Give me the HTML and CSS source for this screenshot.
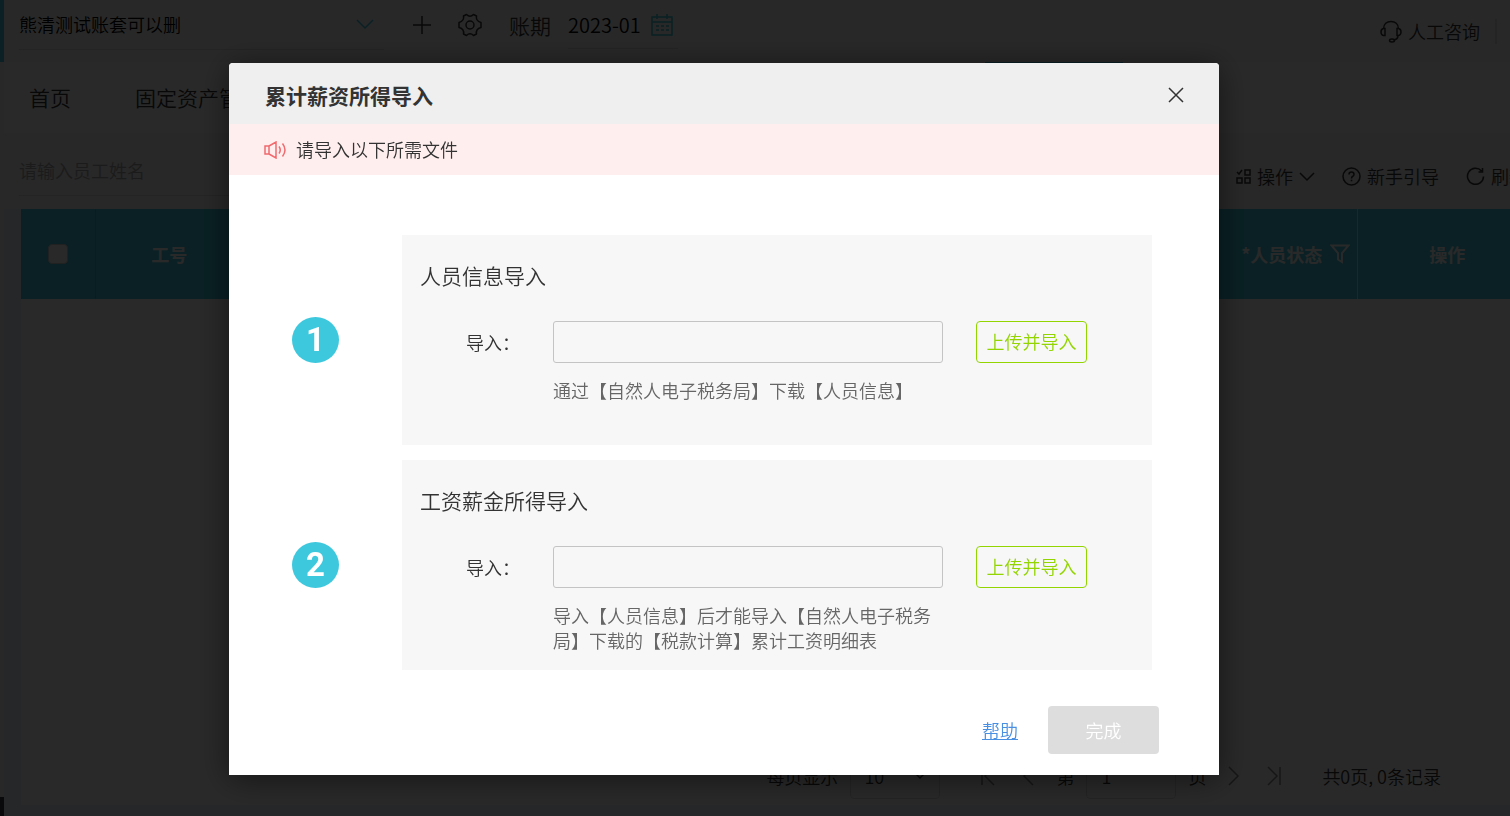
FILE: index.html
```
<!DOCTYPE html>
<html lang="zh-CN">
<head>
    <meta charset="UTF-8">
    <meta name="viewport" content="width=device-width, initial-scale=1.0">
    <title>累计薪资所得导入</title>
    <link rel="stylesheet" href="styles.css">
</head>
<body>

    <div class="app">
        <div class="rail">
            <div class="rail-top"></div>
            <div class="rail-bottom"></div>
        </div>

        <div class="main">
            <header class="topbar">
                <div class="topbar-left">
                    <div class="account">
                        <select aria-label="账套">
                            <option>熊清测试账套可以删</option>
                        </select>
                        <svg class="teal" width="18" height="11" viewBox="0 0 18 11"><path d="M1 1l8 8 8-8"/></svg>
                    </div>
                    <button class="icon-btn" aria-label="新增">
                        <svg width="20" height="20" viewBox="0 0 20 20"><path d="M10 1v18M1 10h18"/></svg>
                    </button>
                    <button class="icon-btn gear" aria-label="设置">
                        <svg width="24" height="24" viewBox="0 0 24 24"><path d="M8.500 1.500Q12 5 15.500 1.500L18.500 3Q17.500 8 23 9.500V14.500Q17.500 16 18.500 21L15.500 22.500Q12 19 8.500 22.500L5.500 21Q6.500 16 1 14.500V9.500Q6.500 8 5.500 3Z" stroke-linejoin="round"/><circle cx="12" cy="12" r="4"/></svg>
                    </button>
                    <label class="period-label" for="period">账期</label>
                    <div class="period">
                        <input id="period" type="text" value="2023-01">
                        <svg class="teal" width="22" height="22" viewBox="0 0 22 22"><path d="M1 3h20v18H1zM1 8h20M6 0v5M16 0v5M5 12h3M10 12h3M15 12h3M5 16h3M10 16h3M15 16h3"/></svg>
                    </div>
                </div>
                <a class="service" href="#">
                    <svg width="22" height="23" viewBox="0 0 22 23"><path d="M3.500 9C3.500 4 7 1.500 11 1.500S18.500 4 18.500 9M3.500 8.500H5v7H3.500Q1 15 1 12t2.500-3.500zM18.500 8.500H17v7h1.500Q21 15 21 12t-2.500-3.500zM18 15.500q0 4-4.500 4.500"/><ellipse cx="12" cy="20.500" rx="2.500" ry="1.500"/></svg>
                    人工咨询
                </a>
            </header>

            <nav class="tabs">
                <a href="#">首页</a>
                <a href="#">固定资产管理</a>
                <span class="tab-active"></span>
            </nav>

            <div class="toolbar">
                <input class="search" type="text" placeholder="请输入员工姓名" aria-label="员工姓名">
                <div class="tools">
                    <button>
                        <svg width="15" height="15" viewBox="0 0 15 15"><path d="M1 3l2 2 3-4M9 1h5v5H9zM1 9h5v5H1zM9 9h5v5H9z"/></svg>
                        操作
                        <svg width="16" height="10" viewBox="0 0 16 10"><path d="M1 1l7 7 7-7"/></svg>
                    </button>
                    <button>
                        <svg width="19" height="19" viewBox="0 0 19 19"><circle cx="9.500" cy="9.500" r="8.500"/><path d="M7 7.500q0-2.500 2.500-2.500T12 7.500q0 1.300-1.500 2-1 .5-1 2M9.500 12.700v1.500"/></svg>
                        新手引导
                    </button>
                    <button>
                        <svg width="19" height="19" viewBox="0 0 19 19"><path d="M15.500 4A8 8 0 1 0 17.500 9.500M16.500 1v4h-4"/></svg>
                        刷新
                    </button>
                </div>
            </div>

            <div class="grid">
                <table>
                    <thead>
                        <tr>
                            <th class="col-check"><input type="checkbox" aria-label="全选"></th>
                            <th class="col-no">工号</th>
                            <th></th>
                            <th class="col-state">
                                <div class="th-filter">
                                    *人员状态
                                    <svg width="20" height="20" viewBox="0 0 20 20"><path d="M1.500 1.500h17L12 9v9l-4-2.500V9z"/></svg>
                                </div>
                            </th>
                            <th class="col-action">操作</th>
                        </tr>
                    </thead>
                </table>

                <div class="pager">
                    <label for="page-size">每页显示</label>
                    <div class="page-size">
                        <select id="page-size"><option>10</option></select>
                        <svg width="12" height="8" viewBox="0 0 12 8"><path d="M1 1l5 5 5-5"/></svg>
                    </div>
                    <div class="pager-nav pager-prev">
                        <button aria-label="第一页"><svg width="14" height="20" viewBox="0 0 14 20"><path d="M1 1v18M13 1L4 10l9 9"/></svg></button>
                        <button aria-label="上一页"><svg width="12" height="20" viewBox="0 0 12 20"><path d="M11 1L2 10l9 9"/></svg></button>
                    </div>
                    <label for="page-no">第</label>
                    <input id="page-no" type="text" value="1">
                    <span>页</span>
                    <div class="pager-nav">
                        <button aria-label="下一页"><svg width="12" height="20" viewBox="0 0 12 20"><path d="M1 1l9 9-9 9"/></svg></button>
                        <button aria-label="最后一页"><svg width="14" height="20" viewBox="0 0 14 20"><path d="M13 1v18M1 1l9 9-9 9"/></svg></button>
                    </div>
                    <span class="total">共0页, 0条记录</span>
                </div>
            </div>
        </div>
    </div>

    <div class="overlay">
        <section class="modal" role="dialog" aria-modal="true" aria-labelledby="modal-title">
            <div class="modal-header">
                <h1 id="modal-title">累计薪资所得导入</h1>
                <button class="close" aria-label="关闭">
                    <svg width="16" height="16" viewBox="0 0 16 16"><path d="M1 1l14 14M15 1L1 15"/></svg>
                </button>
            </div>

            <div class="notice">
                <svg width="22" height="18" viewBox="0 0 22 18"><path d="M1 5h4v8H1zM5 5l7-4v16l-7-4M15 5.500q2.500 3.500 0 7M18.500 2.500q5 6.500 0 13"/></svg>
                请导入以下所需文件
            </div>

            <div class="steps">
                <div class="step">
                    <div class="step-no"><span>1</span></div>
                    <div class="card">
                        <h2>人员信息导入</h2>
                        <div class="field">
                            <label for="file-staff">导入：</label>
                            <input id="file-staff" type="text">
                            <button>上传并导入</button>
                        </div>
                        <p>通过【自然人电子税务局】下载【人员信息】</p>
                    </div>
                </div>

                <div class="step">
                    <div class="step-no"><span>2</span></div>
                    <div class="card">
                        <h2>工资薪金所得导入</h2>
                        <div class="field">
                            <label for="file-salary">导入：</label>
                            <input id="file-salary" type="text">
                            <button>上传并导入</button>
                        </div>
                        <p>导入【人员信息】后才能导入【自然人电子税务局】下载的【税款计算】累计工资明细表</p>
                    </div>
                </div>
            </div>

            <div class="modal-footer">
                <a href="#">帮助</a>
                <button disabled>完成</button>
            </div>
        </section>
    </div>

</body>
</html>
```

FILE: styles.css
```
* {
    box-sizing: border-box;
}
body {
    margin: 0;
    overflow: hidden;
    font-family: "Noto Sans CJK SC", "Noto Sans", sans-serif;
    font-weight: 350;
    font-size: 18px;
    line-height: 25px;
    color: #333;
}
button, input, select {
    font: inherit;
    color: inherit;
    background: none;
    border: none;
    border-radius: 0;
    padding: 0;
    margin: 0;
    appearance: none;
    outline: none;
}
a {
    color: inherit;
    text-decoration: none;
}
svg {
    display: block;
    flex: none;
    fill: none;
    stroke: currentColor;
    stroke-width: 1.5;
}
.teal {
    color: #3ec8de;
}

/* page behind the dialog */
.app {
    display: flex;
    min-height: 100vh;
}
.rail {
    width: 4px;
    display: flex;
    flex-direction: column;
    justify-content: space-between;
    background: #f4f4f4;
}
.rail-top {
    height: 62px;
    background: #3ec8de;
}
.rail-bottom {
    height: 19px;
    background: #3a3a48;
}
.main {
    flex: 1;
    min-width: 0;
    display: flex;
    flex-direction: column;
    padding-bottom: 11px;
    background: #e8eff4;
}
.topbar {
    height: 62px;
    display: flex;
    justify-content: space-between;
    align-items: center;
    padding: 0 13px 0 15px;
    background: #f8f8f8;
}
.topbar-left {
    display: flex;
    align-items: center;
    align-self: flex-start;
    height: 50px;
}
.account {
    display: flex;
    align-items: center;
    width: 365px;
    height: 50px;
    padding-right: 10px;
    border-bottom: 1px solid #ddd;
}
.account select {
    flex: 1;
    color: #000;
}
.icon-btn {
    margin-left: 28px;
}
.gear {
    margin-left: 26px;
}
.period-label {
    margin-left: 27px;
    font-size: 21px;
}
.period {
    display: flex;
    align-items: center;
    width: 110px;
    height: 48px;
    margin-left: 17px;
    border-bottom: 1px solid #ddd;
}
.period input {
    width: 83px;
    color: #000;
    font-size: 20px;
}
.service {
    display: flex;
    align-items: center;
    gap: 6px;
    padding-right: 15px;
    border-right: 2px solid #ddd;
}
.tabs {
    height: 71px;
    display: flex;
    align-items: center;
    gap: 64px;
    padding-left: 25px;
    background: #fff;
    font-size: 21px;
}
.tab-active {
    width: 138px;
    height: 71px;
    margin-left: 660px;
    border-top: 2px solid #3ec8de;
}
.toolbar {
    height: 76px;
    display: flex;
    align-items: flex-start;
    justify-content: space-between;
    padding-left: 15px;
    background: #f4f4f4;
}
.search {
    width: 365px;
    height: 63px;
    padding-top: 12px;
    border-bottom: 1px solid #ddd;
}
.search::placeholder {
    color: #aaa;
    opacity: 1;
}
.tools {
    display: flex;
    gap: 27px;
    margin-top: 31px;
    margin-right: -17px;
    white-space: nowrap;
}
.tools button {
    display: flex;
    align-items: center;
    gap: 6px;
}
.grid {
    flex: 1;
    display: flex;
    flex-direction: column;
    justify-content: space-between;
    margin-left: 17px;
    background: #fff;
}
.grid table {
    width: calc(100% + 27px);
    table-layout: fixed;
    border-collapse: collapse;
    background: #3ec8de;
    color: #fff;
}
.grid th {
    height: 90px;
    padding: 0;
    font-weight: 700;
    text-align: center;
}
.grid .col-check {
    width: 74px;
    border-right: 1px solid #35b2c6;
}
.grid .col-no {
    width: 148px;
}
.grid .col-state {
    width: 122px;
    border-right: 1px solid #c4e8f0;
}
.th-filter {
    display: flex;
    align-items: center;
    justify-content: center;
    gap: 8px;
}
.th-filter svg {
    stroke-width: 2;
}
.grid .col-action {
    width: 180px;
}
.col-check input {
    display: block;
    width: 20px;
    height: 20px;
    margin: 0 auto;
    border: 1px solid #ccc;
    border-radius: 4px;
    background: #fff;
}
.pager {
    display: flex;
    align-items: center;
    justify-content: flex-end;
    gap: 12px;
    padding: 0 69px 6px 0;
}
.page-size, #page-no {
    width: 90px;
    height: 46px;
    border: 1px solid #ddd;
    border-radius: 4px;
}
.page-size {
    display: flex;
    align-items: center;
    padding: 0 13px;
}
.page-size select {
    flex: 1;
}
#page-no {
    padding-left: 14px;
}
.pager-nav {
    display: flex;
    gap: 8px;
    color: #888;
}
.pager-prev, .total {
    margin-left: 20px;
}
.pager-nav button {
    width: 32px;
    display: flex;
    justify-content: center;
}

/* import dialog */
.overlay {
    position: fixed;
    inset: 0;
    display: flex;
    justify-content: center;
    align-items: flex-start;
    padding: 63px 62px 0 0;
    background: rgba(0, 0, 0, 0.84);
}
.modal {
    width: 990px;
    background: #fff;
    border-radius: 4px 4px 0 0;
    box-shadow: 0 4px 32px rgba(0, 0, 0, 0.5);
    overflow: hidden;
}
.modal-header {
    display: flex;
    align-items: center;
    justify-content: space-between;
    height: 61px;
    padding: 3px 35px 0 36px;
    background: #efefef;
}
.modal-header h1 {
    margin: 0;
    font-size: 21px;
    font-weight: 700;
}
.notice {
    display: flex;
    align-items: center;
    gap: 10px;
    height: 51px;
    padding-left: 35px;
    background: #ffeeee;
}
.notice svg {
    color: #f06a6e;
}
.steps {
    display: flex;
    flex-direction: column;
    gap: 15px;
    padding: 60px 67px 0 0;
}
.step {
    display: flex;
    align-items: center;
}
.step-no {
    flex: 1;
    display: flex;
    justify-content: center;
}
.step-no span {
    width: 47px;
    height: 46px;
    border-radius: 50%;
    background: #3ec8de;
    color: #fff;
    font-family: Roboto, sans-serif;
    font-size: 33px;
    font-weight: 700;
    line-height: 46px;
    text-align: center;
}
.card {
    width: 750px;
    min-height: 210px;
    padding: 25px 18px 17px;
    background: #f7f7f7;
}
.card h2 {
    margin: 0 0 31px;
    font-size: 21px;
    font-weight: 350;
    line-height: 30px;
}
.field {
    display: flex;
    align-items: center;
}
.field label {
    width: 87px;
    margin-left: 46px;
}
.field input {
    width: 390px;
    height: 42px;
    padding: 0 10px;
    border: 1px solid #c4c4c4;
    border-radius: 3px;
}
.field button {
    width: 111px;
    height: 42px;
    padding-bottom: 2px;
    margin-left: 33px;
    border: 1px solid #93d500;
    border-radius: 4px;
    color: #93d500;
}
.card p {
    width: 390px;
    margin: 15px 0 0 133px;
    color: #666;
}
.modal-footer {
    display: flex;
    align-items: center;
    justify-content: flex-end;
    gap: 30px;
    padding: 36px 60px 21px;
}
.modal-footer a {
    color: #4a90e2;
    text-decoration: underline;
}
.modal-footer button {
    width: 111px;
    height: 48px;
    border-radius: 4px;
    background: #ddd;
    color: #fff;
}
```
